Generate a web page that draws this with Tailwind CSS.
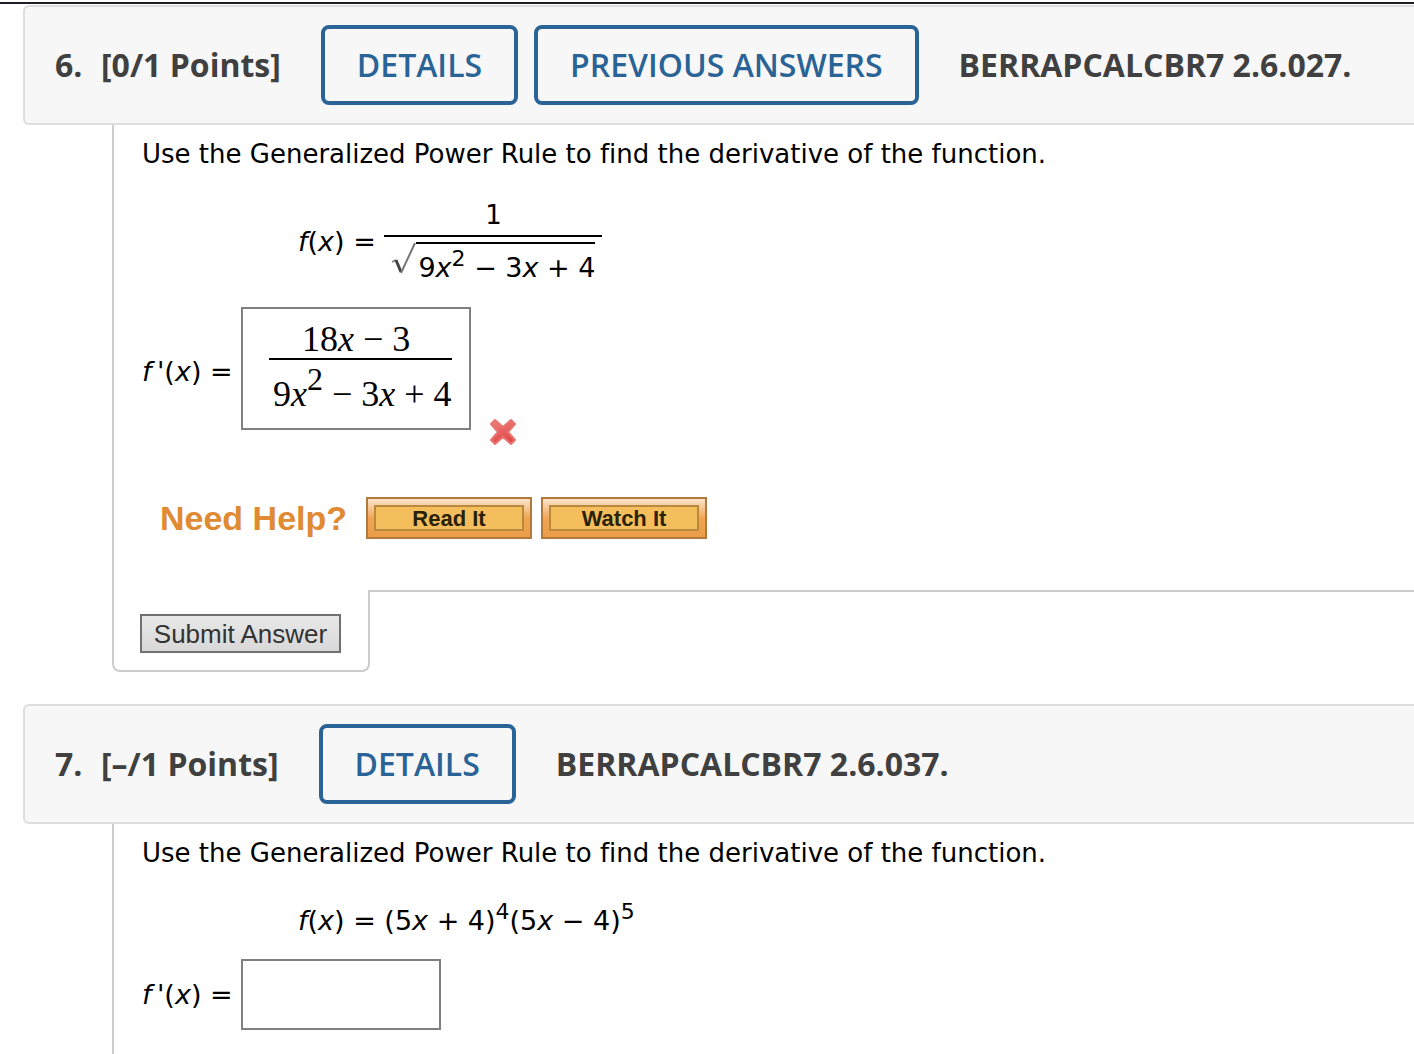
<!DOCTYPE html>
<html lang="en">
<head>
    <meta charset="UTF-8">
    <meta name="viewport" content="width=device-width, initial-scale=1.0">
    <title>Generalized Power Rule</title>
    <script src="https://cdn.jsdelivr.net/npm/@tailwindcss/browser@4"></script>
</head>
<body class="bg-white text-black min-h-screen flex flex-col pt-[2px] overflow-x-hidden font-['DejaVu_Sans',sans-serif] text-[26px] leading-8 [font-variant-ligatures:none]">

    <div class="h-[2px] bg-[#1d1d26] mb-px"></div>

    <!-- Question 6 -->
    <section class="mb-8">
        <header class="ml-[23px] flex items-center border-2 border-r-0 border-[#dedede] rounded-l-md bg-[#f7f7f7] py-[18px] pl-[30px] font-['Open_Sans',sans-serif] text-[32px] leading-10 font-bold text-[#404040] whitespace-nowrap">
            <span class="w-[46px]">6.</span>
            <span>[0/1 Points]</span>
            <button type="button" class="ml-10 h-20 px-8 border-4 border-[#2a6496] rounded-lg font-semibold text-[#2a6496]">DETAILS</button>
            <button type="button" class="ml-4 h-20 px-8 border-4 border-[#2a6496] rounded-lg font-semibold text-[#2a6496]">PREVIOUS ANSWERS</button>
            <h2 class="ml-10">BERRAPCALCBR7 2.6.027.</h2>
        </header>

        <div class="ml-[112px]">
            <div class="border-l-2 border-[#cccccc] pl-7 pt-[13px] pb-[51px]">
                <p>Use the Generalized Power Rule to find the derivative of the function.</p>

                <div class="ml-[156px] mt-[29px] flex items-center text-[27px]">
                    <span class="whitespace-pre"><i>f</i>(<i>x</i>) = </span>
                    <div class="flex flex-col items-center">
                        <span class="text-[26px]">1</span>
                        <div class="border-t-2 border-black px-[7px] pt-[5px] flex items-start mt-1">
                            <svg class="w-[25px] h-[34px]" viewBox="0 0 25 34" fill="none">
                                <path d="M1 20L5 18" stroke="#777" stroke-width="1.5"/>
                                <path d="M5 18L10 30" stroke="#444" stroke-width="3"/>
                                <path d="M10 31L24 1" stroke="#777" stroke-width="2"/>
                            </svg>
                            <span class="border-t-2 border-black pt-2 pl-[2px] whitespace-nowrap">9<i>x</i><sup class="text-[22px]">2</sup> − 3<i>x</i> + 4</span>
                        </div>
                    </div>
                </div>

                <div class="mt-[6px] flex items-center">
                    <span class="whitespace-pre text-[27px] pt-2"><i>f</i>&thinsp;<i>'</i>(<i>x</i>) = </span>
                    <div class="border-2 border-[#808080] h-[123px] w-[230px] pt-3 pl-2 flex flex-col items-center font-['Liberation_Serif',serif] text-[36px] leading-9">
                        <span class="pr-2 whitespace-nowrap">18<i>x</i> − 3</span>
                        <span class="border-t-2 border-black mt-px pt-4 pl-1 whitespace-nowrap">9<i>x</i><sup class="text-[32px]">2</sup> − 3<i>x</i> + 4</span>
                    </div>
                    <svg class="w-7 h-7 ml-[18px] mt-32" viewBox="0 0 28 28" role="img" aria-label="Incorrect">
                        <defs>
                            <linearGradient id="wrong" x1="0" y1="0" x2="0.4" y2="1">
                                <stop offset="0" stop-color="#ee8480"/>
                                <stop offset="1" stop-color="#e04848"/>
                            </linearGradient>
                        </defs>
                        <path d="M6 2L14 9L22 2L26 6L19 14L26 22L22 26L14 19L6 26L2 22L9 14L2 6Z" fill="url(#wrong)" stroke="#ea7471" stroke-width="2" stroke-linejoin="round"/>
                    </svg>
                </div>

                <div class="ml-[18px] mt-[51px] flex items-center font-['Liberation_Sans',sans-serif]">
                    <span class="text-[34px] leading-10 font-bold text-[#e08b33] w-[206px]">Need Help?</span>
                    <button type="button" class="w-[166px] h-[42px] p-[6px] border-2 border-[#b07a3c] bg-linear-to-b from-[#fbe3cb] via-[#f0a552] to-[#ec9c48]">
                        <span class="flex h-full items-center justify-center border-2 border-[#b98a3e] bg-[#f3be5b] pt-px text-[22px] leading-6 font-bold text-[#2a2208]">Read It</span>
                    </button>
                    <button type="button" class="ml-[9px] w-[166px] h-[42px] p-[6px] border-2 border-[#b07a3c] bg-linear-to-b from-[#fbe3cb] via-[#f0a552] to-[#ec9c48]">
                        <span class="flex h-full items-center justify-center border-2 border-[#b98a3e] bg-[#f3be5b] pt-px text-[22px] leading-6 font-bold text-[#2a2208]">Watch It</span>
                    </button>
                </div>
            </div>

            <div class="flex">
                <div class="border-2 border-t-0 border-[#cccccc] rounded-b-lg pl-[26px] pr-[27px] pt-6 pb-[17px]">
                    <button type="button" class="border-2 border-[#707070] bg-linear-to-b from-[#e8e8e8] to-[#d8d8d8] h-[39px] w-[201px] font-['Liberation_Sans',sans-serif] text-[26px] leading-8 text-[#333333] whitespace-nowrap">Submit Answer</button>
                </div>
                <div class="flex-1 border-t-2 border-[#cccccc]"></div>
            </div>
        </div>
    </section>

    <!-- Question 7 -->
    <section class="flex-1 flex flex-col">
        <header class="ml-[23px] flex items-center border-2 border-r-0 border-[#dedede] rounded-l-md bg-[#f7f7f7] py-[18px] pl-[30px] font-['Open_Sans',sans-serif] text-[32px] leading-10 font-bold text-[#404040] whitespace-nowrap">
            <span class="w-[46px]">7.</span>
            <span>[–/1 Points]</span>
            <button type="button" class="ml-10 h-20 px-8 border-4 border-[#2a6496] rounded-lg font-semibold text-[#2a6496]">DETAILS</button>
            <h2 class="ml-10">BERRAPCALCBR7 2.6.037.</h2>
        </header>

        <div class="ml-[112px] flex-1 border-l-2 border-[#cccccc] pl-7 pt-[13px] pb-6">
            <p>Use the Generalized Power Rule to find the derivative of the function.</p>

            <p class="ml-[156px] mt-9 text-[27px] whitespace-nowrap"><i>f</i>(<i>x</i>) = (5<i>x</i> + 4)<sup class="text-[22px]">4</sup>(5<i>x</i> − 4)<sup class="text-[22px]">5</sup></p>

            <div class="mt-[22px] flex items-center">
                <label for="answer7" class="whitespace-pre text-[27px]"><i>f</i>&thinsp;<i>'</i>(<i>x</i>) = </label>
                <input id="answer7" type="text" class="w-[200px] h-[71px] border-2 border-[#808080] px-3 bg-white">
            </div>
        </div>
    </section>

</body>
</html>
